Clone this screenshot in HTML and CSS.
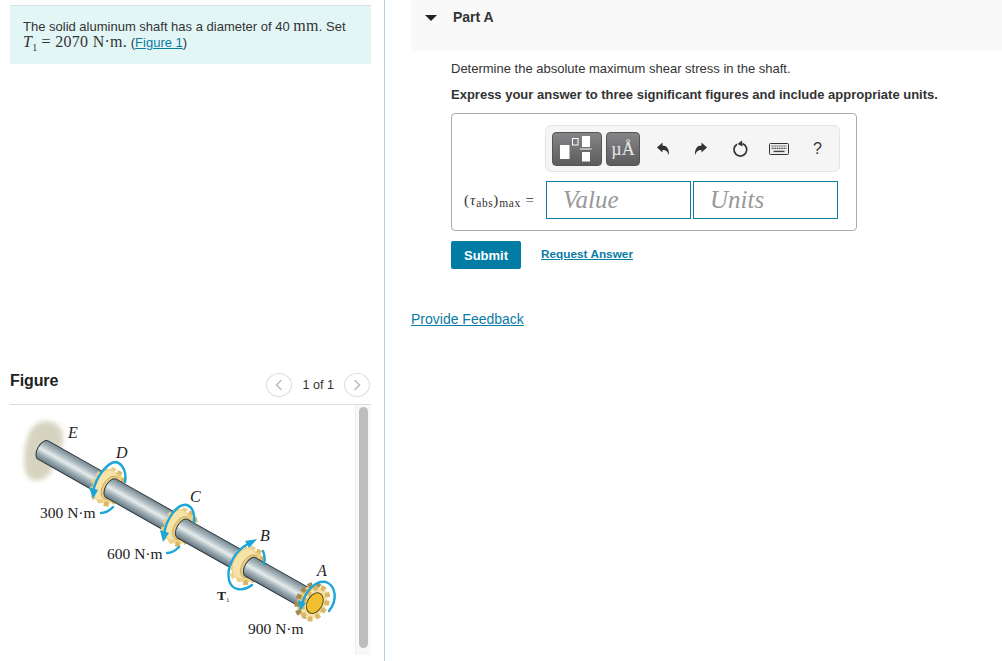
FILE: index.html
```html
<!DOCTYPE html>
<html lang="en">
<head>
<meta charset="utf-8">
<title>Part A</title>
<link rel="stylesheet" href="styles.css">
</head>
<body>
<div class="page">
  <aside class="left">
    <div class="problem">
      <div class="line">The solid aluminum shaft has a diameter of 40 <span class="math">mm</span>. Set</div>
      <div class="line"><span class="math"><i>T</i><sub>1</sub> = 2070 N·m.</span> (<a href="#">Figure 1</a>)</div>
    </div>
    <div class="fig-head">
      <h2>Figure</h2>
      <div class="pager">
        <span class="pg-btn"><svg width="24" height="22" viewBox="0 0 24 22"><path d="M14.5 6 L9.5 11 L14.5 16" fill="none" stroke="#bbb" stroke-width="1.5"/></svg></span>
        <span class="pg-text">1 of 1</span>
        <span class="pg-btn"><svg width="24" height="22" viewBox="0 0 24 22"><path d="M9.5 6 L14.5 11 L9.5 16" fill="none" stroke="#bbb" stroke-width="1.5"/></svg></span>
      </div>
    </div>
    <div class="fig-body">
      <svg class="figure" width="345" height="250" viewBox="10 405 345 250">
        <defs>
          <linearGradient id="sh" gradientUnits="userSpaceOnUse" x1="0" y1="-10.5" x2="0" y2="10.5">
            <stop offset="0" stop-color="#76878f"/>
            <stop offset=".28" stop-color="#aebcc2"/>
            <stop offset=".5" stop-color="#e6ecec"/>
            <stop offset=".75" stop-color="#9aabb3"/>
            <stop offset="1" stop-color="#66777f"/>
          </linearGradient>
          <filter id="blur" x="-20%" y="-20%" width="140%" height="140%"><feGaussianBlur stdDeviation="2.5"/></filter>
          <g id="gear">
            <ellipse cx="4" cy="0" rx="11" ry="17" fill="#f0d68c" stroke="#d8b766" stroke-width="5" stroke-dasharray="4.5 3.5"/>
            <ellipse cx="-3" cy="0" rx="11" ry="17" fill="#f7e3a8" stroke="#ecd08a" stroke-width="5" stroke-dasharray="4.5 3.5"/>
            <ellipse cx="-3" cy="0" rx="10.5" ry="16.5" fill="#f7e3a8" stroke="#e6c777" stroke-width=".7"/>
            <ellipse cx="3" cy="0" rx="7.5" ry="12.5" fill="#ecd184" stroke="#b89c58" stroke-width=".7"/>
          </g>
        </defs>
        <path d="M38 423 C50 418 62 424 63 436 C64 448 58 456 52 470 C44 484 28 484 25 470 C23 450 26 430 38 423Z" fill="#d6d4c0" filter="url(#blur)"/>
        <g transform="translate(43 450) rotate(29.4)">
          <path d="M0 -10.5 H76 V10.5 H0 A5.5 10.5 0 0 1 0 -10.5Z" fill="url(#sh)" stroke="#2f3a42" stroke-width="1"/>
          <use href="#gear" x="74"/>
          <path d="M78 -10.5 H158 V10.5 H78 A5.5 10.5 0 0 1 78 -10.5Z" fill="url(#sh)" stroke="#2f3a42" stroke-width="1"/>
          <use href="#gear" x="156"/>
          <path d="M160 -10.5 H236 V10.5 H160 A5.5 10.5 0 0 1 160 -10.5Z" fill="url(#sh)" stroke="#2f3a42" stroke-width="1"/>
          <use href="#gear" x="234"/>
          <path d="M238 -10.5 H300 V10.5 H238 A5.5 10.5 0 0 1 238 -10.5Z" fill="url(#sh)" stroke="#2f3a42" stroke-width="1"/>
          <ellipse cx="306" cy="0" rx="11" ry="17" fill="#e8cb7c" stroke="#a58c4c" stroke-width="5" stroke-dasharray="4.5 3.5"/>
          <ellipse cx="312" cy="0" rx="11" ry="17" fill="#f7e3a8" stroke="#d8b766" stroke-width="5" stroke-dasharray="4.5 3.5"/>
          <ellipse cx="312" cy="0" rx="7.5" ry="11" fill="#f0c030" stroke="#5e4f1c" stroke-width="1"/>
        </g>
        <g fill="none" stroke="#1ba5d8" stroke-width="2.4" stroke-linecap="round">
          <path d="M93 492 C96 476 108 462 116 462 C123 464 127 473 125 482"/>
          <path d="M101 513 C104 513 109 511 113 507"/>
          <path d="M164 535 C166 518 178 503 187 505 C193 507 195 515 194 522"/>
          <path d="M167 553 C171 553 175 551 179 547"/>
          <path d="M248 544 C236 550 226 566 229 580 C232 592 244 591 252 585"/>
          <path d="M263 551 C265 556 265 560 264 564"/>
          <path d="M302 604 C306 590 316 580 326 582 C336 586 338 600 329 611"/>
        </g>
        <g fill="#1ba5d8">
          <path d="M93 499 L89 487 L98 490Z"/>
          <path d="M163 542 L160 530 L169 533Z"/>
          <path d="M257 539 L245 541 L249 548Z"/>
          <path d="M300 611 L298 600 L306 603Z"/>
        </g>
        <g class="fig-label">
          <text x="68" y="438" class="it">E</text>
          <text x="116" y="458" class="it">D</text>
          <text x="190" y="502" class="it">C</text>
          <text x="260" y="541" class="it">B</text>
          <text x="317" y="576" class="it">A</text>
          <text x="40" y="518">300 N·m</text>
          <text x="107" y="559">600 N·m</text>
          <text x="248" y="634">900 N·m</text>
          <text x="217" y="600" class="bold">T<tspan class="sub" dy="2">1</tspan></text>
        </g>
      </svg>
      <div class="scroll"><div class="thumb"></div></div>
    </div>
  </aside>
  <main class="right">
    <header class="part-head">
      <span class="tri"></span>
      <span class="part-title">Part A</span>
    </header>
    <div class="content">
      <p class="q">Determine the absolute maximum shear stress in the shaft.</p>
      <p class="q strong">Express your answer to three significant figures and include appropriate units.</p>
      <div class="answer">
        <div class="toolbar">
          <span class="tb-btn wide">
            <svg width="50" height="34" viewBox="0 0 50 34">
              <rect x="8" y="13" width="9.5" height="14" fill="#fff"/>
              <rect x="20.5" y="6.5" width="5.5" height="6.5" fill="none" stroke="#fff" stroke-width="1"/>
              <rect x="30" y="4" width="8" height="11" fill="#fff"/>
              <rect x="28" y="16.5" width="11.5" height="1" fill="#fff"/>
              <rect x="30" y="20" width="8" height="9.5" fill="#fff"/>
            </svg>
          </span>
          <span class="tb-btn mu">µÅ</span>
          <span class="tb-icons">
            <svg width="16" height="16" viewBox="0 0 16 16"><path d="M2 6.5 L7.5 1.5 V4.5 C11.5 4.5 14.5 7.5 14 14.5 C12.8 10.5 11 9 7.5 9 V11.5Z" fill="#333"/></svg>
            <svg width="16" height="16" viewBox="0 0 16 16"><path d="M14 6.5 L8.5 1.5 V4.5 C4.5 4.5 1.5 7.5 2 14.5 C3.2 10.5 5 9 8.5 9 V11.5Z" fill="#333"/></svg>
            <svg width="18" height="18" viewBox="0 0 18 18"><path d="M6 4.2 A6.4 6.4 0 1 0 11.5 3.6" fill="none" stroke="#333" stroke-width="1.7"/><path d="M11 0.5 L6.5 4 L11.5 6.6Z" fill="#333"/></svg>
            <svg class="kb" width="20" height="12" viewBox="0 0 20 12"><rect x=".5" y=".5" width="19" height="11" rx="1" fill="#eee" stroke="#333"/><path d="M2.5 3h15M2.5 5.3h15" stroke="#444" stroke-width="1.2" stroke-dasharray="1.2 .6"/><path d="M4.5 8.4h11" stroke="#444" stroke-width="1.4"/></svg>
            <span class="help">?</span>
          </span>
        </div>
        <div class="row">
          <span class="math eq">(<i>τ</i><sub>abs</sub>)<sub>max</sub> =</span>
          <span class="field">Value</span>
          <span class="field">Units</span>
        </div>
      </div>
      <div class="actions">
        <button class="submit" type="button">Submit</button>
        <a class="req" href="#">Request Answer</a>
      </div>
    </div>
    <a class="feedback" href="#">Provide Feedback</a>
  </main>
</div>
</body>
</html>
```
FILE: styles.css
```css
* { box-sizing: border-box; }
html, body { margin: 0; padding: 0; }
body { font-family: "Liberation Sans", Arial, sans-serif; font-size: 13px; color: #333; background: #fff; }
a { color: #0a7ca5; }

.page { display: flex; width: 1002px; height: 661px; overflow: hidden; }

.left { width: 385px; flex: none; padding: 5px 13px 0 10px; border-right: 1px solid #b8cfe6; }
.problem { height: 59px; padding: 12px 13px 0; background: #e2f6f6; border-top: 1px solid #d3e3ea; font-size: 13px; line-height: 16px; }
.line { height: 16px; white-space: nowrap; }
.math { font-family: "Liberation Serif", "Times New Roman", serif; font-size: 16px; letter-spacing: .3px; }
.math sub { font-size: 10px; line-height: 0; letter-spacing: 0; }

.fig-head { display: flex; justify-content: space-between; align-items: center; height: 42px; margin-top: 299px; padding-bottom: 1px; border-bottom: 1px solid #ddd; }
.fig-head h2 { margin: -4px 0 0; font-size: 16px; font-weight: bold; color: #222; line-height: 20px; letter-spacing: -.1px; }
.pager { display: flex; align-items: center; gap: 10px; margin: 3px 1px 0 0; }
.pg-btn { display: block; width: 26px; height: 24px; border: 1px solid #ddd; border-radius: 50%; }
.pg-btn svg { display: block; }
.pg-text { font-size: 12.6px; color: #333; }

.fig-body { display: flex; height: 250px; }
.figure { display: block; flex: none; }
.scroll { width: 16px; background: #f8f8f8; border-left: 1px solid #eee; padding: 2px 3px 7px 3px; }
.thumb { height: 100%; background: #bdbdbd; border-radius: 5px; }
.fig-label text { font-family: "Liberation Serif", "Times New Roman", serif; font-size: 15.5px; fill: #222; }
.fig-label .it { font-style: italic; font-size: 16px; }
.fig-label .bold { font-weight: bold; font-size: 13.5px; }
.fig-label .sub { font-size: 7px; font-weight: normal; }

.right { flex: 1; padding-left: 26px; min-width: 0; }
.part-head { position: relative; height: 51px; padding: 10px 0 0 42px; background: #f9f9f9; display: flex; align-items: flex-start; }
.tri { position: absolute; left: 14px; top: 15px; width: 0; height: 0; border-left: 6px solid transparent; border-right: 6px solid transparent; border-top: 6px solid #222; }
.part-title { font-weight: bold; font-size: 14px; color: #333; line-height: 15px; }

.content { padding: 10px 0 0 40px; }
.q { margin: 0 0 11px; font-size: 13px; line-height: 15px; color: #333; }
.strong { font-weight: bold; margin-bottom: 11px; }

.answer { width: 406px; height: 118px; border: 1px solid #aaa; border-radius: 4px; padding: 11px 18px 0 12px; }
.toolbar { display: flex; align-items: center; width: 295px; height: 47px; margin-left: 81px; padding: 0 6px; background: #f5f5f5; border: 1px solid #e4e4e4; border-radius: 6px; gap: 4px; }
.tb-btn { display: block; flex: none; height: 34px; border-radius: 4px; background: linear-gradient(#858587, #5c5c5e); border: 1px solid #555; color: #e8e8e8; }
.tb-btn svg { display: block; margin: -1px; }
.wide { width: 50px; }
.mu { width: 34px; text-align: center; font-family: "Liberation Serif", serif; font-size: 18px; line-height: 33px; }
.tb-icons { display: flex; align-items: center; flex: 1; justify-content: space-between; padding: 0 11px; }
.kb { margin: 0 2px 0 -2px; }
.help { font-size: 16px; color: #333; }

.row { display: flex; align-items: center; margin-top: 9px; gap: 2px; }
.eq { width: 80px; flex: none; font-size: 15px; letter-spacing: .9px; color: #333; white-space: nowrap; }
.eq sub { font-size: 11.5px; letter-spacing: .6px; vertical-align: -2px; }
.field { width: 145px; height: 38px; border: 1px solid #0a7ca5; padding-left: 16px; font-family: "Liberation Serif", serif; font-style: italic; font-size: 25px; line-height: 35px; color: #999; }

.actions { display: flex; align-items: center; gap: 20px; margin-top: 10px; }
.submit { width: 70px; height: 28px; padding: 0; border: 0; border-radius: 2px; background: #007ca5; color: #fff; font: bold 13px "Liberation Sans", Arial, sans-serif; }
.req { font-size: 11.8px; font-weight: bold; margin-top: -2px; }

.feedback { display: inline-block; margin-top: 42px; font-size: 14px; line-height: 16px; }
```
